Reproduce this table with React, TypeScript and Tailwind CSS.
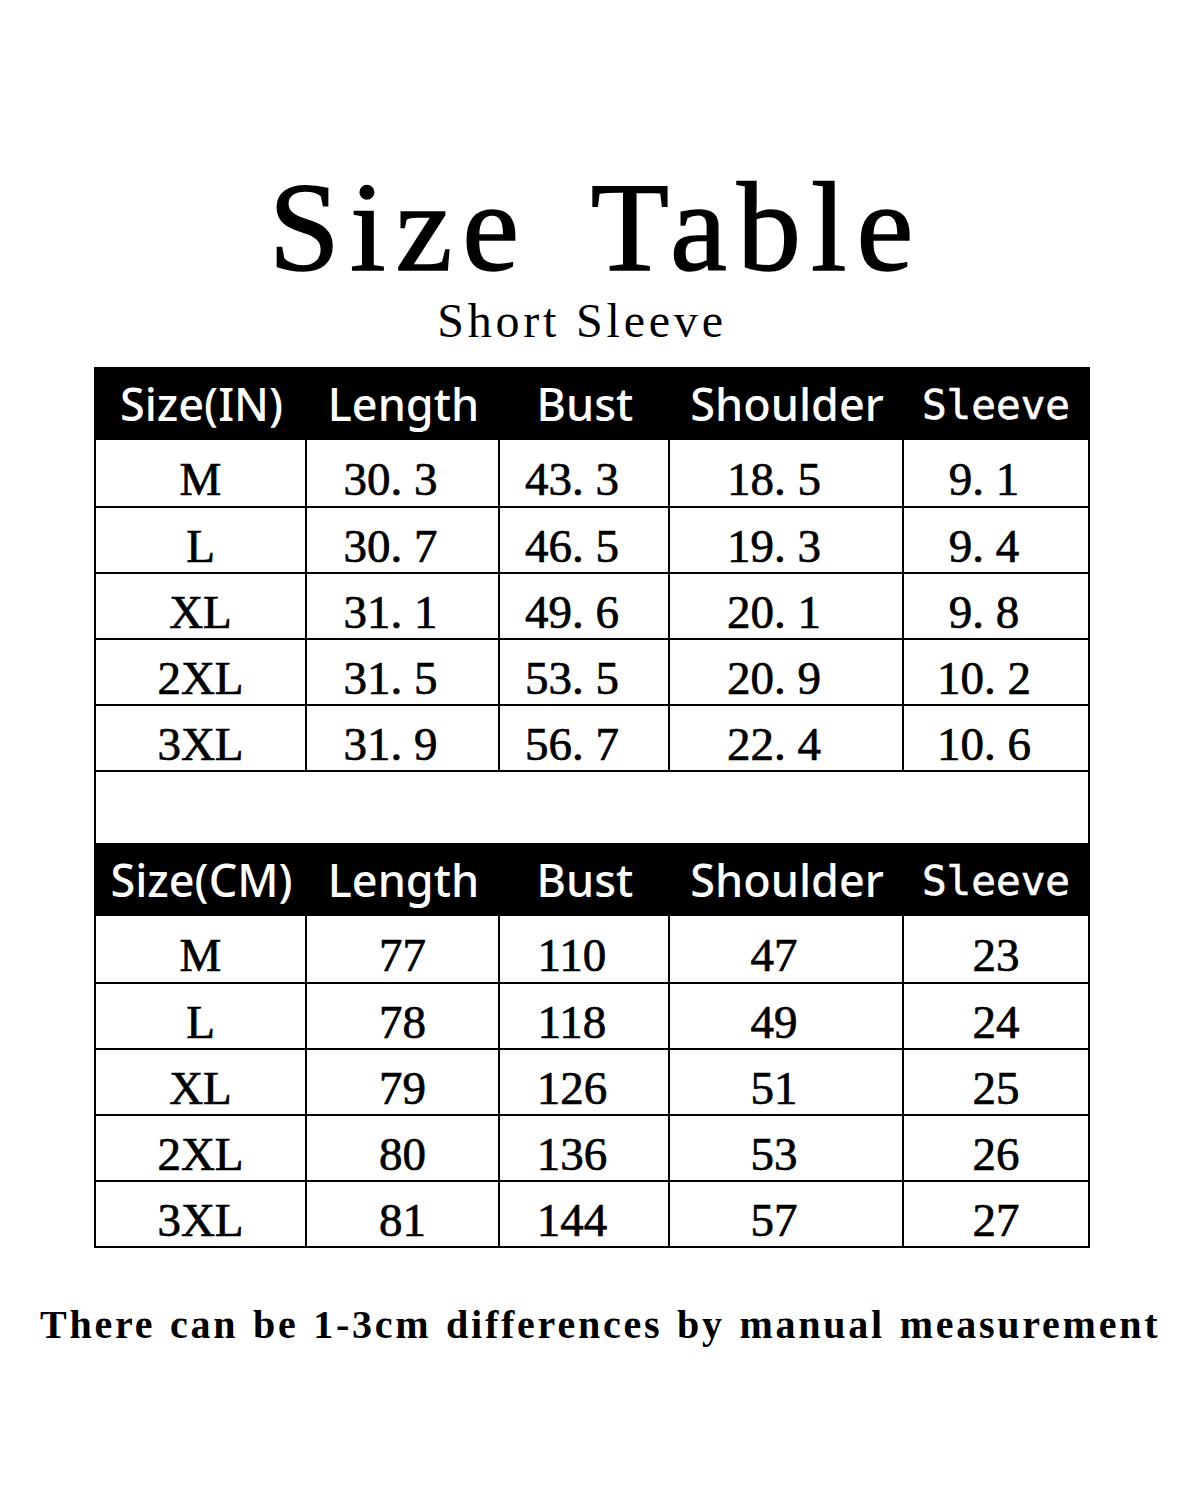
import React from "react";

const serif = "font-['Liberation_Serif',serif]";

interface SizeTableProps {
  unit: string;
  rows: string[][];
  // columns whose numbers sit a bit left of centre in the original
  shifted: boolean[];
}

const headers = ["Length", "Bust", "Shoulder"];
const cols = "grid grid-cols-[211px_193px_170px_234px_184px]";

const HeaderRow = ({ unit }: { unit: string }) => (
  <div className={`${cols} h-[73px] bg-black text-white`}>
    <div className="flex items-center justify-center font-['Noto_Sans',sans-serif] text-[45px] font-medium">
      Size({unit})
    </div>
    {headers.map((h) => (
      <div
        key={h}
        className="flex items-center justify-center font-['Noto_Sans',sans-serif] text-[45px] font-medium"
      >
        {h}
      </div>
    ))}
    <div className="flex items-center justify-center pt-1 font-['DejaVu_Sans_Mono',monospace] text-[41px] font-normal [-webkit-text-stroke:0.6px_white]">
      Sleeve
    </div>
  </div>
);

const SizeTable = ({ unit, rows, shifted }: SizeTableProps) => (
  <>
    <HeaderRow unit={unit} />
    {rows.map((row, i) => (
      <div key={row[0]} className={`${cols} h-[66px] ${i > 0 ? "border-t-2 border-black" : ""}`}>
        {row.map((cell, j) => (
          <div
            key={j}
            className={`flex items-center justify-center pt-3 ${serif} text-[47px] leading-none [-webkit-text-stroke:0.7px_black] ${
              j < row.length - 1 ? "border-r-2 border-black" : ""
            } ${shifted[j] ? "pr-6" : ""}`}
          >
            {cell}
          </div>
        ))}
      </div>
    ))}
  </>
);

const inchRows = [
  ["M", "30. 3", "43. 3", "18. 5", "9. 1"],
  ["L", "30. 7", "46. 5", "19. 3", "9. 4"],
  ["XL", "31. 1", "49. 6", "20. 1", "9. 8"],
  ["2XL", "31. 5", "53. 5", "20. 9", "10. 2"],
  ["3XL", "31. 9", "56. 7", "22. 4", "10. 6"],
];

const cmRows = [
  ["M", "77", "110", "47", "23"],
  ["L", "78", "118", "49", "24"],
  ["XL", "79", "126", "51", "25"],
  ["2XL", "80", "136", "53", "26"],
  ["3XL", "81", "144", "57", "27"],
];

export default function App() {
  return (
    <div className="min-h-[1499px] w-[1200px] bg-white text-black">
      <div className="flex flex-col items-center pt-[163px]">
        <h1
          className={`${serif} text-[128px] leading-none font-normal tracking-[10px] [word-spacing:22px] pr-[8px] [-webkit-text-stroke:1.5px_black]`}
        >
          Size Table
        </h1>
        <p className={`${serif} mt-[6px] pr-[36px] text-[48px] leading-none tracking-[3.8px]`}>
          Short Sleeve
        </p>
      </div>

      <div className="ml-[94px] mt-[22px] w-[996px] border-x-2 border-b-2 border-black">
        <SizeTable unit="IN" rows={inchRows} shifted={[false, true, true, true, true]} />
        <div className="h-[73px] border-t-2 border-black" />
        <SizeTable unit="CM" rows={cmRows} shifted={[false, false, true, true, false]} />
      </div>

      <p
        className={`${serif} mt-[57px] pl-[40px] text-[40px] leading-none font-bold tracking-[2.75px] [word-spacing:2px] whitespace-nowrap`}
      >
        There can be 1-3cm differences by manual measurement
      </p>
    </div>
  );
}
